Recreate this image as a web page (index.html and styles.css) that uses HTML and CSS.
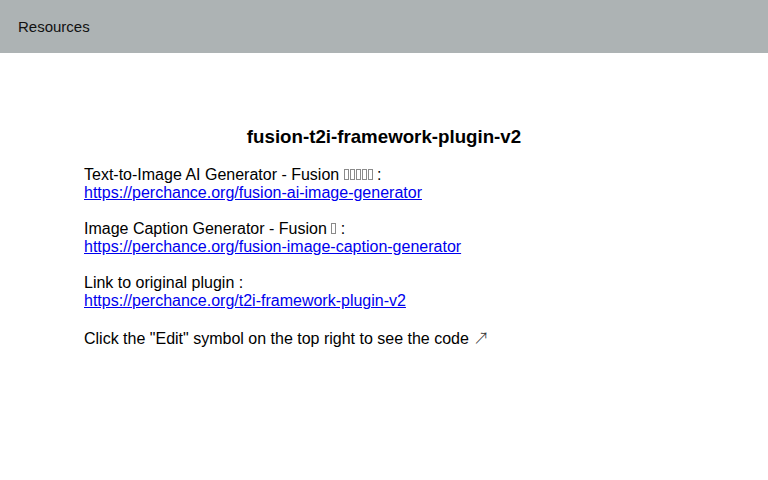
FILE: index.html
```html
<!DOCTYPE html>
<html>
<head>
<meta charset="utf-8">
<link rel="stylesheet" href="styles.css">
</head>
<body>
<header class="topbar"><span class="topbar-link">Resources</span></header>
<main class="content">
<h1 class="title">fusion-t2i-framework-plugin-v2</h1>
<div class="text">Text-to-Image AI Generator - Fusion <span class="tofu-group"><span class="tofu"></span><span class="tofu"></span><span class="tofu"></span><span class="tofu"></span><span class="tofu"></span></span> :<br><a href="#">https://perchance.org/fusion-ai-image-generator</a><br><br>Image Caption Generator - Fusion <span class="tofu-group"><span class="tofu"></span></span> :<br><a href="#">https://perchance.org/fusion-image-caption-generator</a><br><br>Link to original plugin :<br><a href="#">https://perchance.org/t2i-framework-plugin-v2</a><br><br>Click the "Edit" symbol on the top right to see the code <span class="arrow">↗</span></div>
</main>
</body>
</html>
```
FILE: styles.css
```css
html, body { margin: 0; padding: 0; background: #fff; }
body { font-family: "Liberation Sans", Arial, sans-serif; color: #000; }
.topbar { height: 53px; background: #adb3b4; display: flex; align-items: center; padding-left: 18px; box-sizing: border-box; }
.topbar-link { font-size: 15px; color: #111; }
.content { width: 600px; margin: 0 auto; padding-top: 73px; }
.title { font-size: 18.72px; font-weight: bold; text-align: center; margin: 0 0 18px; line-height: 22px; }
.text { font-size: 16px; line-height: 18px; }
.text a { color: #0000ee; }
.tofu-group { display: inline-flex; gap: 1px; align-items: flex-end; vertical-align: baseline; }
.tofu { display: inline-block; width: 5px; height: 11px; border: 1px solid #8a8a8a; box-sizing: border-box; }
.arrow { font-family: "Noto Sans CJK SC", sans-serif; color: #333; font-weight: 300; }
```
